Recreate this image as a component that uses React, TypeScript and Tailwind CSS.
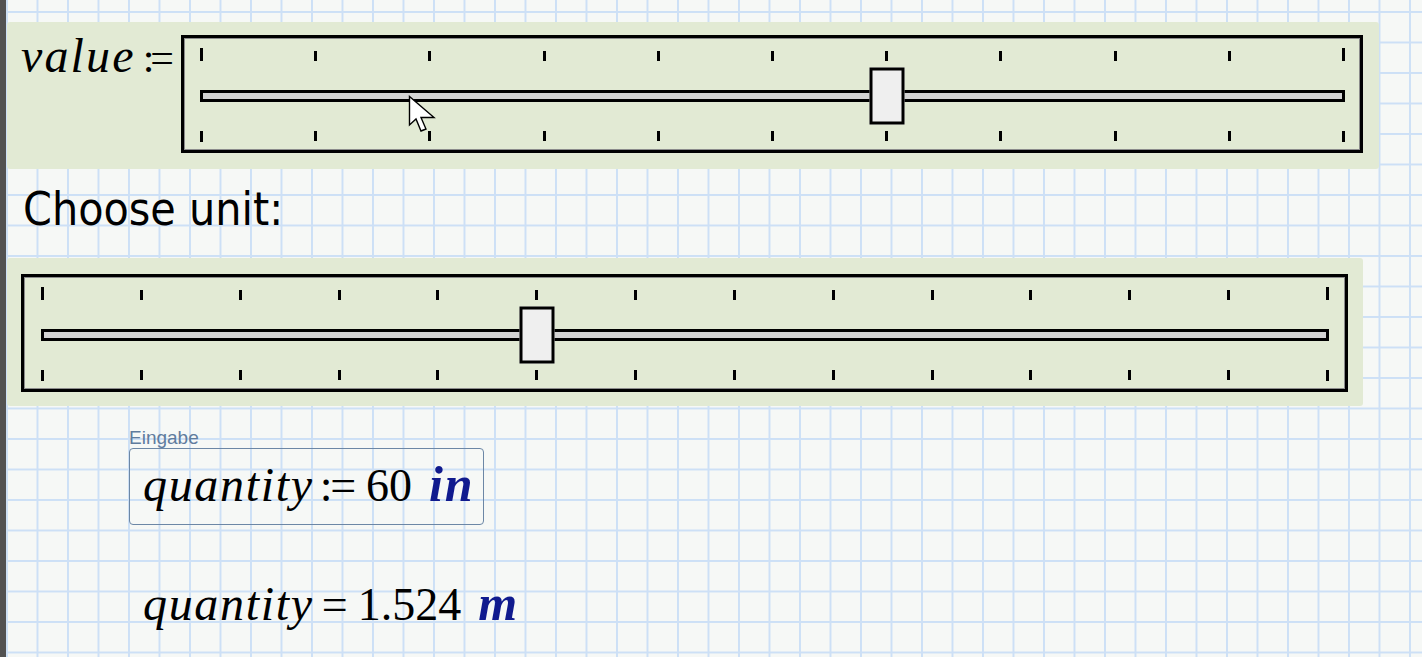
import React from 'react';

const serif = "font-['Liberation_Serif','Times_New_Roman',serif]";

function Ticks({ count, tall, align }: { count: number; tall: string; align: string }) {
  return (
    <div className={`flex justify-between ${align}`}>
      {Array.from({ length: count }, (_, i) => (
        <span
          key={i}
          className={`w-[3px] bg-black ${i === 0 || i === count - 1 ? tall : 'h-[10px]'}`}
        />
      ))}
    </div>
  );
}

function Slider({ count, index, className }: { count: number; index: number; className: string }) {
  const pct = (index / (count - 1)) * 100;
  return (
    <div
      className={`flex h-[118px] flex-col border-[3px] border-black bg-[#e2ead4] shadow-[inset_0_0_0_1px_#8c8c8c] ${className}`}
    >
      <div className="mt-[10px]">
        <Ticks count={count} tall="h-[13px]" align="h-[13px] items-end" />
      </div>
      <div className="relative mt-[29px] h-[12px]">
        <div className="h-full border-[3px] border-black bg-[#d3d3d3]" />
        <div className="absolute inset-y-0 left-[1.5px] right-[1.5px]">
          <div
            className="absolute top-1/2 h-[57px] w-[35px] -translate-x-1/2 -translate-y-1/2 border-[3px] border-black bg-[#efefef]"
            style={{ left: `${pct}%` }}
          />
        </div>
      </div>
      <div className="mt-[29px]">
        <Ticks count={count} tall="h-[11px]" align="h-[11px] items-start" />
      </div>
    </div>
  );
}

function Cursor() {
  return (
    <svg
      className="absolute left-[402px] top-[95px]"
      width="30"
      height="40"
      viewBox="0 0 30 40"
    >
      <path
        d="M1.5 1.5 L1.5 30 L8 24 L13 36 L18 34 L13 22.5 L26 22.5 Z"
        fill="#ffffff"
        stroke="#000000"
        strokeWidth="1.4"
        strokeLinejoin="miter"
      />
    </svg>
  );
}

export default function App() {
  return (
    <div className="flex h-[657px] w-[1422px] overflow-hidden bg-[#f6f8f6]">
      <div className="w-[6px] shrink-0 bg-[#525252]" />
      <div className="relative flex-1 bg-[linear-gradient(90deg,#cde0f6_2px,transparent_2px),linear-gradient(180deg,#cde0f6_2px,transparent_2px)] bg-[size:30.5px_30.5px] bg-[position:0_11px]">
        {/* value slider */}
        <div className="ml-[1px] mt-[22px] flex h-[147px] w-[1372px] items-start rounded-[3px] bg-[#e2ead4]">
          <div className={`w-[174px] shrink-0 pl-[14px] pt-[10px] text-[48px] leading-none text-black ${serif}`}>
            <span className="italic tracking-[0.045em]">value</span>
            <span className="ml-[7px] text-[42px] tracking-[-0.1em]">:=</span>
          </div>
          <Slider count={11} index={6} className="mt-[13px] w-[1182px] pl-[16px] pr-[15px]" />
        </div>

        <div className="ml-[17px] mt-[17px] text-[46px] leading-none text-black font-['DejaVu_Sans_Condensed','DejaVu_Sans',sans-serif] font-stretch-condensed">
          Choose unit:
        </div>

        {/* unit slider */}
        <div className="ml-[1px] mt-[26px] h-[148px] w-[1356px] rounded-[3px] bg-[#e2ead4] pl-[14px] pt-[16px]">
          <Slider count={14} index={5} className="w-[1327px] pl-[17px] pr-[16px]" />
        </div>

        <div className="ml-[123px] mt-[22px] text-[19px] leading-none text-[#5f7c9e] font-['Liberation_Sans',Arial,sans-serif]">
          Eingabe
        </div>
        <div className={`ml-[123px] mt-[1px] h-[77px] w-[355px] rounded-[4px] border-[1.5px] border-[#6c87a6] pl-[13px] pt-[10px] text-[46px] leading-none text-black ${serif}`}>
          <span className="text-[48px] italic tracking-[0.035em]">quantity</span>
          <span className="ml-[6px] tracking-[-0.05em]">:=</span>
          <span className="ml-[12px]">60</span>
          <span className="ml-[17px] text-[50px] font-bold italic tracking-[0.04em] text-[#101a8e]">in</span>
        </div>

        <div className={`ml-[137px] mt-[53px] text-[46px] leading-none text-black ${serif}`}>
          <span className="text-[48px] italic tracking-[0.035em]">quantity</span>
          <span className="ml-[8px]">=</span>
          <span className="ml-[10px]">1.524</span>
          <span className="ml-[17px] text-[50px] font-bold italic tracking-[0.04em] text-[#101a8e]">m</span>
        </div>

        <Cursor />
      </div>
    </div>
  );
}
